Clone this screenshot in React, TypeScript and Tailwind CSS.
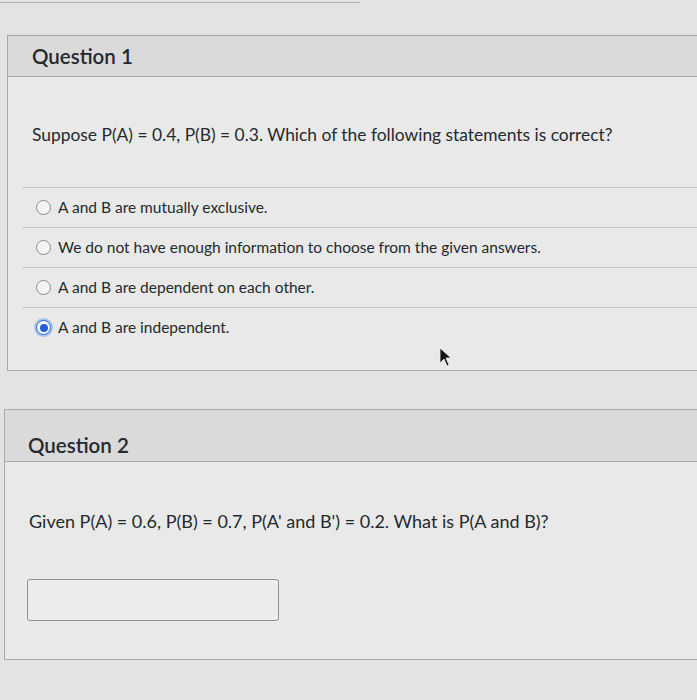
import React from 'react';

const options = [
  'A and B are mutually exclusive.',
  'We do not have enough information to choose from the given answers.',
  'A and B are dependent on each other.',
  'A and B are independent.',
];

const Radio: React.FC<{ checked?: boolean }> = ({ checked }) =>
  checked ? (
    <span className="flex h-[15px] w-[15px] items-center justify-center rounded-full border-[1.5px] border-[#1f5fd8] bg-white shadow-[0_0_0_2px_#a9c4ee]">
      <span className="h-[8px] w-[8px] rounded-full bg-[#1f5fd8]" />
    </span>
  ) : (
    <span className="h-[15px] w-[15px] rounded-full border-[1.5px] border-[#8a8d90] bg-[#f4f4f4]" />
  );

export default function App() {
  return (
    <div
      className="relative h-[700px] w-[697px] overflow-hidden bg-[#e3e3e3] text-[#24292e]"
      style={{ fontFamily: 'Lato, "Open Sans", sans-serif' }}
    >
      {/* previous card edge */}
      <div className="h-[3px] w-[360px] border-b border-[#b4b4b4]" />

      {/* Question 1 */}
      <div className="ml-[7px] mt-[32px] w-[720px] border border-[#a9a9a9] bg-[#e9e9e9]">
        <div className="flex h-[41px] items-center border-b border-[#a9a9a9] bg-[#dadada] pl-[24px] text-[20.5px] font-semibold">
          Question 1
        </div>
        <div className="pb-[23px]">
          <p className="pl-[24px] pt-[46px] text-[17.4px] leading-[24px]">
            Suppose P(A) = 0.4, P(B) = 0.3. Which of the following statements is correct?
          </p>
          <div className="ml-[14px] mt-[40px]">
            {options.map((o, i) => (
              <div
                key={o}
                className="flex h-[40px] items-center gap-[7px] border-t border-[#c4c4c4] pl-[14px] text-[15.5px]"
              >
                <Radio checked={i === 3} />
                <span>{o}</span>
              </div>
            ))}
          </div>
        </div>
      </div>

      {/* Question 2 */}
      <div className="ml-[4px] mt-[38px] w-[720px] border border-[#a9a9a9] bg-[#e9e9e9]">
        <div className="h-[52px] border-b border-[#a9a9a9] bg-[#dadada] pl-[23px] pt-[21px] text-[20.5px] font-semibold leading-[28px]">
          Question 2
        </div>
        <div className="px-[22px] pb-[38px]">
          <p className="pl-[2px] pt-[47px] text-[18px] leading-[24px]">
            Given P(A) = 0.6, P(B) = 0.7, P(A' and B') = 0.2. What is P(A and B)?
          </p>
          <div className="mt-[46px] h-[42px] w-[252px] rounded-[3px] border-[1.5px] border-[#8e9093] bg-[#ececec]" />
        </div>
      </div>

      {/* mouse pointer */}
      <svg className="absolute left-[439px] top-[347px]" width="14" height="20" viewBox="0 0 14 20">
        <path d="M1 1 L1 16 L5 12 L8 19 L10 18 L7 11 L12 11 Z" fill="#111" stroke="#eee" strokeWidth="0.8" />
      </svg>
    </div>
  );
}
